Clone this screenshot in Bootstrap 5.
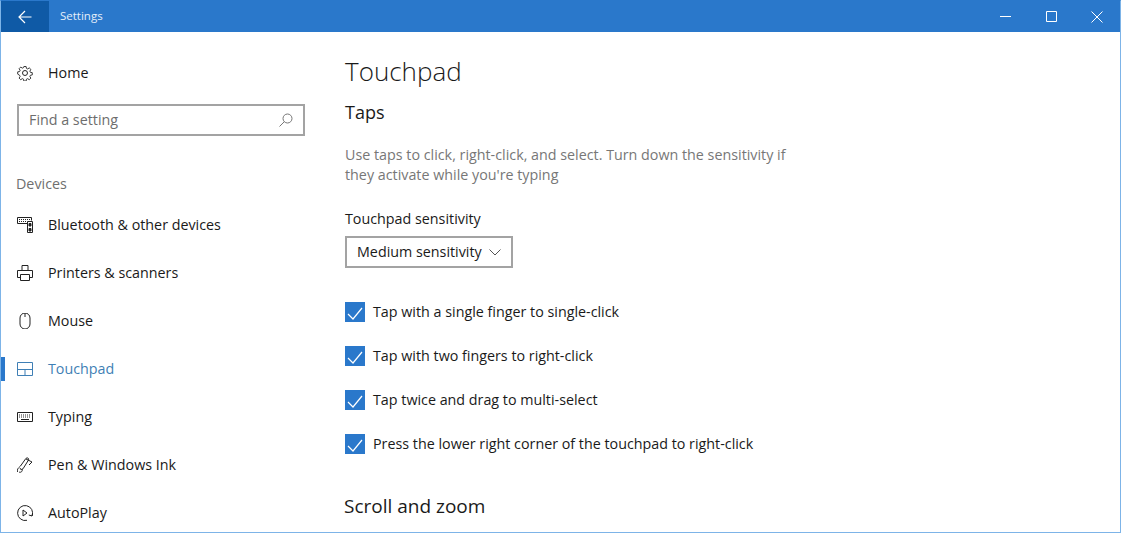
<!DOCTYPE html>
<html lang="en">
  <head>
    <meta charset="UTF-8" />
    <meta name="viewport" content="width=device-width, initial-scale=1.0" />
    <title>Settings</title>
    <link href="https://cdn.jsdelivr.net/npm/bootstrap@5.3.1/dist/css/bootstrap.min.css" rel="stylesheet" />
    <style>
      html, body { height: 533px; overflow: hidden; }
      body { font-family: "Open Sans", "Noto Sans", sans-serif; font-size: 14.3px; color: #1a1a1a; background: #fff; }
      .win-frame { height: 533px; border: 1px solid #7db4e8; border-top-color: #2a78cb; overflow: hidden; }
      .title-bar { height: 31px; background: #2a78cb; color: #e4effa; font-size: 11.5px; }
      .back-btn { width: 48px; background: #0f5aa6; }
      .title-text { padding: 0 0 2px 11px; }
      .win-btn { width: 46px; }
      .side-col { width: 320px; flex: none; padding-left: 16px; }
      .home-row { height: 48px; margin-top: 17px; }
      .nav-ico { width: 16px; height: 16px; flex: none; margin-right: 15px; stroke: #222; fill: none; }
      .search-box { width: 288px; height: 32px; border: 2px solid #a3a3a3; padding: 0 10px; color: #6d6d6d; margin-top: 7px; }
      .side-head { color: #6f6f6f; margin-top: 38px; height: 20px; line-height: 20px; margin-bottom: 7px; margin-left: -1px; }
      .nav-row { height: 48px; }
      .nav-row.now { color: #3f7fb5; }
      .nav-row.now .nav-ico { stroke: #3f7fb5; }
      .now-bar { position: absolute; left: -16px; top: 12px; width: 4px; height: 24px; background: #2a78cb; }
      .main-col { padding-left: 24px; }
      .page-title { font-size: 26px; font-weight: 300; line-height: 36px; margin: 21px 0 0; }
      .sub-title { font-size: 18px; font-weight: 400; line-height: 26px; margin: 10px 0 0; }
      .sub-title.low { font-size: 19px; margin-top: 37px; margin-left: -1px; }
      .help-text { width: 460px; color: #777; line-height: 20px; margin: 20px 0 0; }
      .field-label { line-height: 20px; margin-top: 24px; }
      .pick-box { width: 168px; height: 32px; border: 2px solid #a3a3a3; padding: 0 10px; margin-top: 7px; }
      .check-list { margin-top: 32px; gap: 20px; }
      .tick-box { width: 20px; height: 20px; background: #2a78cb; flex: none; margin-right: 8px; }
      .check-row { height: 24px; }
    </style>
  </head>
  <body>
    <div class="win-frame d-flex flex-column">
      <div class="title-bar d-flex align-items-stretch flex-shrink-0">
        <div class="back-btn d-flex align-items-center justify-content-center">
          <svg width="16" height="16" viewBox="0 0 16 16" fill="none" stroke="#fff" stroke-width="1.2"><path d="M2 8h12.500M8 2 2 8l6 6"/></svg>
        </div>
        <div class="d-flex align-items-center flex-grow-1 title-text">Settings</div>
        <div class="win-btn d-flex align-items-center justify-content-center">
          <svg width="11" height="11" viewBox="0 0 11 11" stroke="#fff"><path d="M0 5.500h11"/></svg>
        </div>
        <div class="win-btn d-flex align-items-center justify-content-center">
          <svg width="11" height="11" viewBox="0 0 11 11" fill="none" stroke="#fff"><path d="M.5.500h10v10H.5z"/></svg>
        </div>
        <div class="win-btn d-flex align-items-center justify-content-center">
          <svg width="12" height="12" viewBox="0 0 12 12" stroke="#fff"><path d="M.5.500l11 11M11.500.500l-11 11"/></svg>
        </div>
      </div>
      <div class="d-flex flex-grow-1">
        <div class="side-col">
          <div class="home-row d-flex align-items-center">
            <svg class="nav-ico" viewBox="0 0 18 18" stroke-width="1.100"><circle cx="9" cy="9" r="2.800"/><path d="M7.600 1h2.800l.4 2.300 1.500.7 2-1.300 2 2-1.300 2 .7 1.500 2.300.4v2.800l-2.300.4-.7 1.500 1.300 2-2 2-2-1.300-1.500.7-.4 2.300H7.600l-.4-2.300-1.500-.7-2 1.300-2-2 1.300-2-.7-1.500L0 10.400V7.600l2.300-.4.7-1.500-1.300-2 2-2 2 1.300 1.500-.7z" transform="translate(.8 .8) scale(.91)"/></svg>
            <span>Home</span>
          </div>
          <div class="search-box d-flex align-items-center justify-content-between">
            <span>Find a setting</span>
            <svg width="14" height="14" viewBox="0 0 14 14" fill="none" stroke="#777"><circle cx="8.500" cy="5.500" r="4.500"/><path d="M5.300 8.700.5 13.500"/></svg>
          </div>
          <div class="side-head">Devices</div>
          <div class="nav-row d-flex align-items-center">
            <svg class="nav-ico" viewBox="0 0 16 16"><path d="M10.500 6.500H.5v-6h14v3"/><path d="M2 2.500h11M2 4.500h8" stroke-dasharray="1 1"/><path d="M10.500 4.500h5v11h-5z"/><path d="M12 6.500h2v2.500h-2zM12 11.500h2v2.500h-2z" fill="#222"/></svg>
            <span>Bluetooth &amp; other devices</span>
          </div>
          <div class="nav-row d-flex align-items-center">
            <svg class="nav-ico" viewBox="0 0 16 16"><path d="M5 5.500v-5h6v5M3.500 12.500h-3v-7h15v7h-3"/><path d="M3.500 9.500h9v6h-9z"/></svg>
            <span>Printers &amp; scanners</span>
          </div>
          <div class="nav-row d-flex align-items-center">
            <svg class="nav-ico" viewBox="0 0 16 16"><path d="M3 5a5 5 0 0 1 10 0v6a5 5 0 0 1-10 0zM8 0v4"/></svg>
            <span>Mouse</span>
          </div>
          <div class="nav-row now d-flex align-items-center position-relative">
            <div class="now-bar"></div>
            <svg class="nav-ico" viewBox="0 0 16 16"><path d="M.5 1.500h15v13H.5zM.5 8.500h15M8 8.500v6"/></svg>
            <span>Touchpad</span>
          </div>
          <div class="nav-row d-flex align-items-center">
            <svg class="nav-ico" viewBox="0 0 16 16"><path d="M.5 3.500h15v9H.5z"/><path d="M2 6h12M2 8h12" stroke-dasharray="1 1"/><path d="M4 10.500h8"/></svg>
            <span>Typing</span>
          </div>
          <div class="nav-row d-flex align-items-center">
            <svg class="nav-ico" viewBox="0 0 16 16"><path d="M.5 15c-1-3 2-5 3-6l5-7c1-2 4-1 3 1l-5 8c-1 2-4 2-3 0M9 2l6 3-3 3M2 15c2 1 4-1 3-3"/></svg>
            <span>Pen &amp; Windows Ink</span>
          </div>
          <div class="nav-row d-flex align-items-center">
            <svg class="nav-ico" viewBox="0 0 16 16"><path d="M10 15.300A7.500 7.500 0 1 1 15 11M15 11l-3.200-1M15 11l1-3.200"/><path d="M6 5v6l4-3z"/></svg>
            <span>AutoPlay</span>
          </div>
        </div>
        <div class="main-col flex-grow-1">
          <h1 class="page-title">Touchpad</h1>
          <h2 class="sub-title">Taps</h2>
          <p class="help-text">Use taps to click, right-click, and select. Turn down the sensitivity if they activate while you're typing</p>
          <div class="field-label">Touchpad sensitivity</div>
          <div class="pick-box d-flex align-items-center justify-content-between">
            <span>Medium sensitivity</span>
            <svg width="12" height="7" viewBox="0 0 12 7" fill="none" stroke="#555"><path d="M.5.500 6 6l5.500-5.500"/></svg>
          </div>
          <div class="check-list d-flex flex-column">
            <div class="check-row d-flex align-items-center">
              <span class="tick-box"><svg width="20" height="20" viewBox="0 0 20 20" fill="none" stroke="#fff" stroke-width="1.200"><path d="m3 10 5 5L17 4"/></svg></span>
              <span>Tap with a single finger to single-click</span>
            </div>
            <div class="check-row d-flex align-items-center">
              <span class="tick-box"><svg width="20" height="20" viewBox="0 0 20 20" fill="none" stroke="#fff" stroke-width="1.200"><path d="m3 10 5 5L17 4"/></svg></span>
              <span>Tap with two fingers to right-click</span>
            </div>
            <div class="check-row d-flex align-items-center">
              <span class="tick-box"><svg width="20" height="20" viewBox="0 0 20 20" fill="none" stroke="#fff" stroke-width="1.200"><path d="m3 10 5 5L17 4"/></svg></span>
              <span>Tap twice and drag to multi-select</span>
            </div>
            <div class="check-row d-flex align-items-center">
              <span class="tick-box"><svg width="20" height="20" viewBox="0 0 20 20" fill="none" stroke="#fff" stroke-width="1.200"><path d="m3 10 5 5L17 4"/></svg></span>
              <span>Press the lower right corner of the touchpad to right-click</span>
            </div>
          </div>
          <h2 class="sub-title low">Scroll and zoom</h2>
        </div>
      </div>
    </div>
    <script src="https://cdn.jsdelivr.net/npm/bootstrap@5.3.1/dist/js/bootstrap.bundle.min.js"></script>
  </body>
</html>
